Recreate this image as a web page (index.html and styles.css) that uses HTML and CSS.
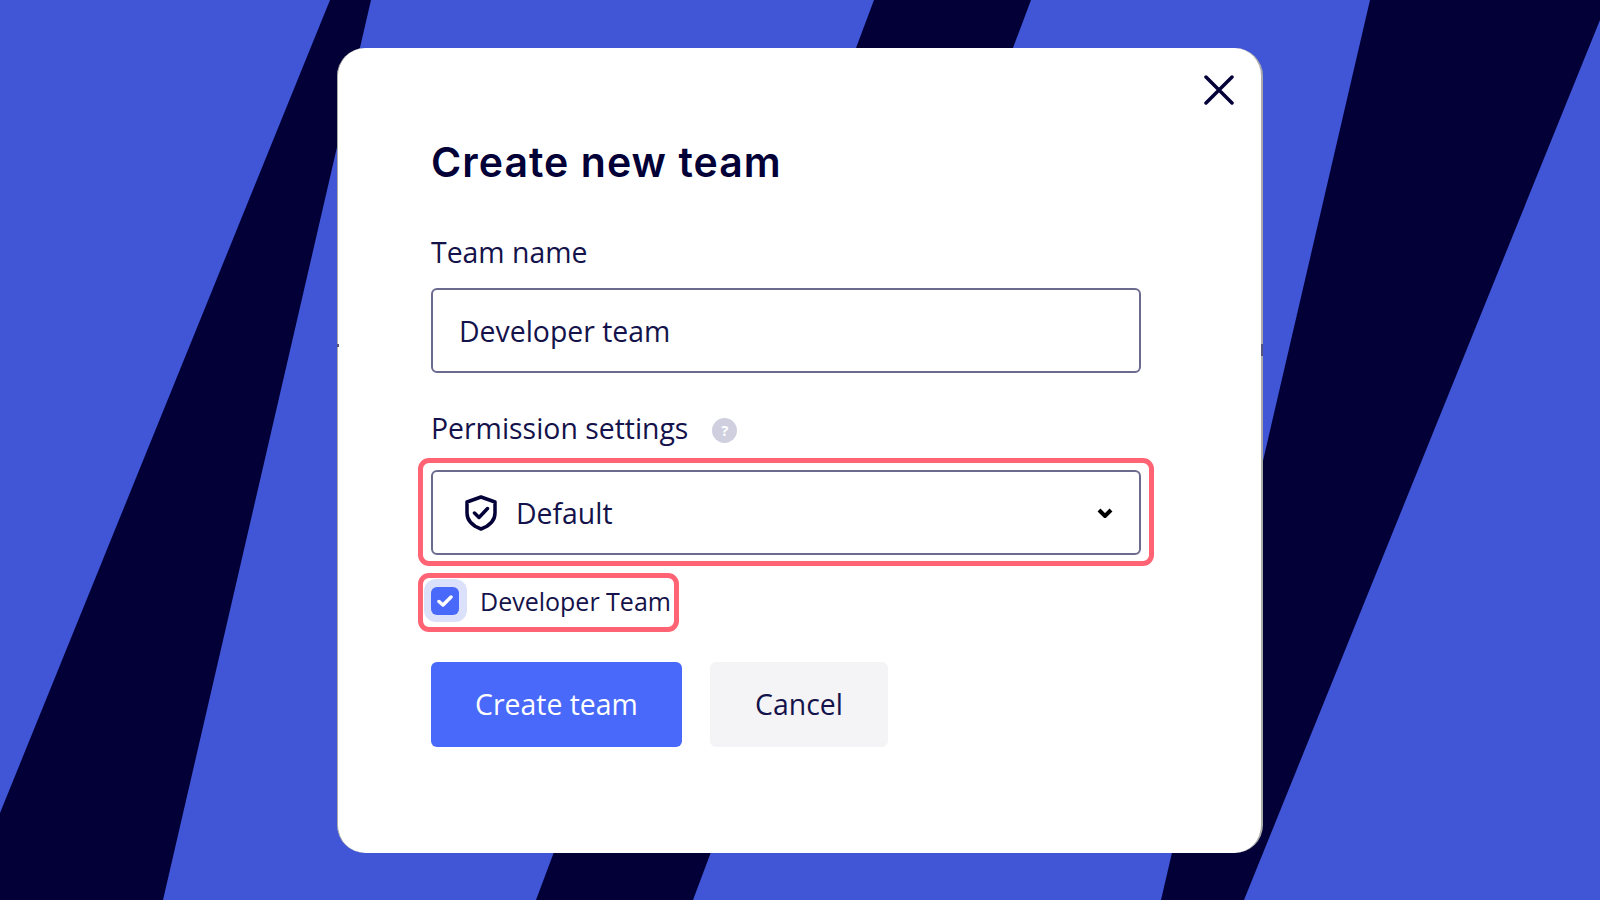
FILE: index.html
```html
<!DOCTYPE html>
<html lang="en">
<head>
    <meta charset="UTF-8">
    <meta name="viewport" content="width=device-width, initial-scale=1.0">
    <title>Create new team</title>
    <link rel="stylesheet" href="styles.css">
</head>
<body>
    <!-- Background stripes -->
    <svg class="stripes" viewBox="0 0 1600 900" aria-hidden="true">
        <polygon points="330,0 371,0 163,900 0,900 0,813"/>
        <polygon points="874,0 1031,0 693,900 536,900"/>
        <polygon points="1370,0 1600,0 1600,20 1244,900 1161,900"/>
    </svg>

    <div class="modal">
        <button type="button" class="close-btn" aria-label="Close">
            <svg viewBox="0 0 30 30" width="30" height="30">
                <path d="M2 2 L28 28 M28 2 L2 28"/>
            </svg>
        </button>

        <h1 class="modal-title">Create new team</h1>

        <form>
            <div class="form-group">
                <label class="field-label" for="teamName">Team name</label>
                <input type="text" id="teamName" class="input-field" value="Developer team">
            </div>

            <div class="form-group">
                <div class="field-label label-row">
                    <span>Permission settings</span>
                    <span class="help-icon">?</span>
                </div>
                <div class="select-field highlighted">
                    <svg class="shield-icon" viewBox="0 0 34 36" width="34" height="36">
                        <path d="M17 2 L31 7 V18 C31 26 25 31 17 34 C9 31 3 26 3 18 V7 Z"/>
                        <path d="M10.5 18 L15 22.5 L23.5 13.5"/>
                    </svg>
                    <span class="select-value">Default</span>
                    <svg class="chevron-icon" viewBox="0 0 16 10" width="16" height="10">
                        <path d="M2 2 L8 8 L14 2"/>
                    </svg>
                </div>
            </div>

            <label class="check-row highlighted">
                <span class="check-halo">
                    <span class="check-box">
                        <svg viewBox="0 0 16 14" width="16" height="14">
                            <path d="M2 7.5 L6 11 L14 3"/>
                        </svg>
                    </span>
                </span>
                <span class="check-text">Developer Team</span>
            </label>

            <div class="actions">
                <button type="button" class="btn btn-primary">Create team</button>
                <button type="button" class="btn btn-secondary">Cancel</button>
            </div>
        </form>
    </div>
</body>
</html>
```

FILE: styles.css
```css
* {
    margin: 0;
    padding: 0;
    box-sizing: border-box;
}

body {
    font-family: 'Open Sans', sans-serif;
    background: #4056d6;
    height: 100vh;
    overflow: hidden;
    display: flex;
    align-items: center;
    justify-content: center;
    color: #14124a;
}

.stripes {
    position: absolute;
    top: 0;
    left: 0;
    width: 1600px;
    height: 900px;
    fill: #020037;
}

.modal {
    position: relative;
    width: 926px;
    height: 805px;
    padding: 92px 120px 0 93px;
    background: #fff;
    border-radius: 28px;
    border-left: 1px solid #aaa;
    border-right: 2px solid #aaa;
}

/* Small marks on the modal edges */
.modal::before,
.modal::after {
    content: "";
    position: absolute;
    top: 296px;
    width: 2px;
    background: #55557a;
}

.modal::before {
    left: -1px;
    height: 3px;
}

.modal::after {
    right: -2px;
    height: 12px;
}

.close-btn {
    position: absolute;
    top: 27px;
    right: 27px;
    width: 30px;
    height: 30px;
    background: none;
    border: none;
}

.close-btn svg {
    display: block;
    fill: none;
    stroke: #020037;
    stroke-width: 3.5;
    stroke-linecap: round;
}

.modal-title {
    font-family: Inter, sans-serif;
    font-size: 41px;
    line-height: 44px;
    font-weight: 600;
    letter-spacing: 1.05px;
    color: #020037;
    margin-bottom: 49px;
}

.form-group {
    margin-bottom: 28px;
}

.form-group:first-child {
    margin-bottom: 36px;
}

.field-label {
    display: block;
    font-size: 28.4px;
    line-height: 38px;
    margin-bottom: 17px;
}

.label-row {
    display: flex;
    align-items: center;
    gap: 24px;
    margin-bottom: 23px;
}

.help-icon {
    width: 25px;
    height: 25px;
    border-radius: 50%;
    background: #cfcfdf;
    color: #fff;
    font-size: 15px;
    line-height: 25px;
    font-weight: 700;
    text-align: center;
    margin-top: 6px;
}

.input-field {
    display: block;
    width: 100%;
    height: 85px;
    padding: 2px 26px 0;
    border: 2px solid #6b6b8f;
    border-radius: 6px;
    font-family: inherit;
    font-size: 28.4px;
    color: #14124a;
    background: #fff;
}

.select-field {
    display: flex;
    align-items: center;
    width: 100%;
    height: 85px;
    padding: 2px 26px 0 31px;
    border: 2px solid #6b6b8f;
    border-radius: 6px;
    font-size: 28.4px;
}

.shield-icon {
    fill: none;
    stroke: #020037;
    stroke-width: 3.5;
    stroke-linejoin: round;
    stroke-linecap: round;
    margin-right: 18px;
}

.select-value {
    flex: 1;
}

.chevron-icon {
    fill: none;
    stroke: #000;
    stroke-width: 4;
}

/* Red annotation boxes */
.highlighted {
    position: relative;
}

.highlighted::after {
    content: "";
    position: absolute;
    top: -14px;
    right: -15px;
    bottom: -13px;
    left: -15px;
    border: 5px solid #ff6374;
    border-radius: 11px;
}

.check-row {
    display: inline-flex;
    align-items: center;
    gap: 15px;
    height: 36px;
    margin-bottom: 43px;
}

.check-row.highlighted::after {
    top: -10px;
    right: -8px;
    bottom: -13px;
    left: -13px;
}

.check-halo {
    display: flex;
    align-items: center;
    justify-content: center;
    width: 43px;
    height: 43px;
    margin: 0 -7px;
    padding-right: 1px;
    background: #dbe1fb;
    border-radius: 12px;
}

.check-box {
    display: flex;
    align-items: center;
    justify-content: center;
    width: 28px;
    height: 28px;
    background: #4869f9;
    border-radius: 6px;
}

.check-box svg {
    fill: none;
    stroke: #fff;
    stroke-width: 3.5;
    stroke-linecap: round;
    stroke-linejoin: round;
}

.check-text {
    font-size: 25px;
    margin-left: 5px;
}

.actions {
    display: flex;
    gap: 28px;
}

.btn {
    height: 85px;
    border: none;
    border-radius: 6px;
    font-family: inherit;
    font-size: 28.4px;
}

.btn-primary {
    width: 251px;
    background: #4869f9;
    color: #fff;
}

.btn-secondary {
    width: 178px;
    background: #f4f4f7;
    color: #14124a;
}
```
